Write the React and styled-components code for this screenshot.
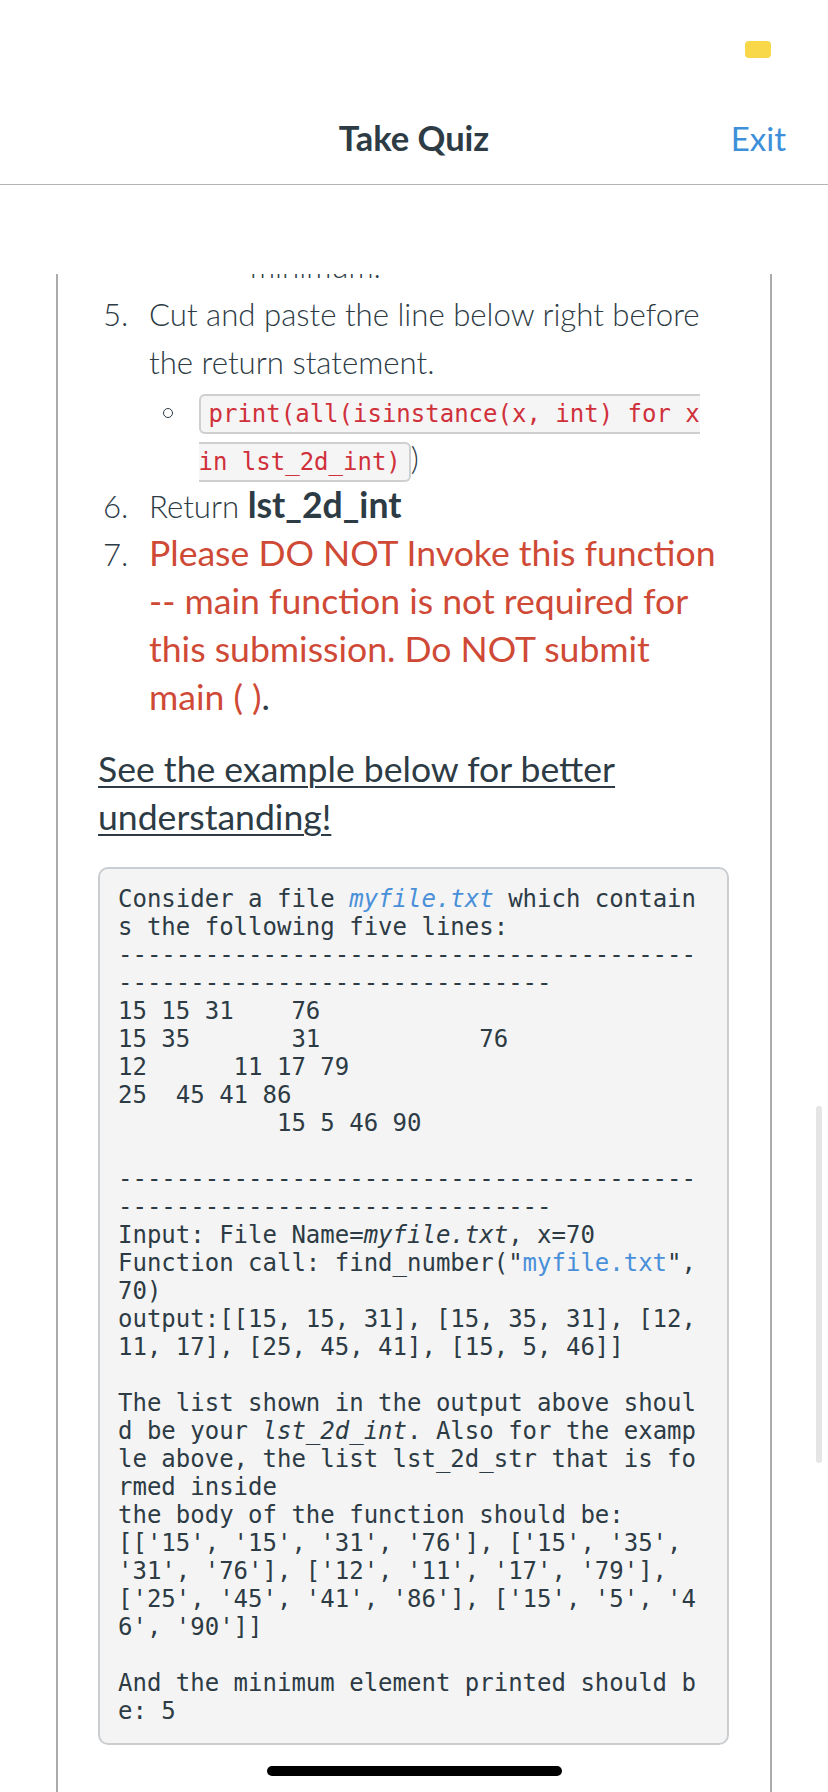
import React from "react";
import styled, { createGlobalStyle } from "styled-components";

const Global = createGlobalStyle`
  html, body { margin: 0; padding: 0; background: #fff; }
  * { box-sizing: border-box; }
`;

const Screen = styled.div`
  position: relative;
  width: 828px;
  height: 1792px;
  overflow: hidden;
  background: #ffffff;
  font-family: Lato, "Open Sans", sans-serif;
  color: #2d3b45;
`;

const StatusBar = styled.div`
  height: 96px;
  display: flex;
  justify-content: flex-end;
  align-items: flex-start;
  padding: 41px 57px 0 0;
`;

const Battery = styled.div`
  width: 26px;
  height: 17px;
  border-radius: 4px;
  background: #f8d748;
`;

const NavBar = styled.header`
  height: 89px;
  display: grid;
  grid-template-columns: 1fr auto 1fr;
  align-items: baseline;
  padding-top: 21px;
  border-bottom: 1px solid #b5b5b5;
  line-height: normal;
`;

const Title = styled.h1`
  grid-column: 2;
  margin: 0;
  font-size: 34.5px;
  font-weight: 700;
  color: #2d3b45;
`;

const ExitLink = styled.span`
  justify-self: end;
  padding-right: 42px;
  font-size: 33px;
  color: #3d8fda;
  font-weight: 400;
`;

const Card = styled.main`
  margin: 89px 56px 0;
  height: 1518px;
  overflow: hidden;
  border-left: 2px solid #ababab;
  border-right: 2px solid #ababab;
  padding: 0 41px 0 40px;
  font-size: 31.2px;
  line-height: 48px;
  font-weight: 300;
`;

const ClippedLine = styled.div`
  margin-top: -32px;
  padding-left: 152px;
`;

const List = styled.ol`
  list-style: none;
  margin: 0;
  padding: 0;
`;

const Item = styled.li`
  display: grid;
  grid-template-columns: 51px 1fr;
`;

const Num = styled.span`
  padding-left: 5px;
`;

const SubList = styled.ul`
  list-style: none;
  margin: 0;
  padding: 0;
`;

const SubItem = styled.li`
  display: grid;
  grid-template-columns: 49.5px 1fr;
`;

const Bullet = styled.span`
  display: block;
  width: 10px;
  height: 10px;
  margin: 22px 0 0 14px;
  border: 1.6px solid #2d3b45;
  border-radius: 50%;
`;

const Code = styled.code`
  font-family: "DejaVu Sans Mono", monospace;
  font-size: 24px;
  line-height: 28px;
  color: #d0303a;
  background: #f5f5f5;
  border: 2px solid #cdcfd1;
  border-radius: 6px;
  padding: 4px 8px;
`;

const Strong = styled.strong`
  font-size: 35.6px;
  line-height: 1;
  font-weight: 700;
`;

const Warn = styled.span`
  font-size: 35.6px;
  line-height: 1;
  color: #cf4a36;
  font-weight: 400;
`;

const ExampleLink = styled.p`
  margin: 24px 0 0;
`;

const LinkText = styled.span`
  font-size: 35.6px;
  line-height: 1;
  font-weight: 400;
  text-decoration: underline;
  text-decoration-thickness: 2px;
  text-underline-offset: 4px;
`;

const Pre = styled.pre`
  margin: 25px 0 0;
  padding: 16px 18px 18px;
  background: #f4f4f4;
  border: 2px solid #cbced1;
  border-radius: 10px;
  font-family: "DejaVu Sans Mono", monospace;
  font-size: 24px;
  line-height: 28px;
  color: #2d3b45;
  white-space: pre;
  overflow: hidden;
`;

const FileName = styled.span`
  color: ${(p) => (p.$blue ? "#4a90d9" : "inherit")};
  font-style: ${(p) => (p.$italic ? "italic" : "normal")};
`;

const Em = styled.em`
  font-style: italic;
`;

const Scrollbar = styled.div`
  position: absolute;
  left: 816px;
  top: 1106px;
  width: 6px;
  height: 357px;
  border-radius: 3px;
  background: #e5e5e5;
`;

const HomeIndicator = styled.div`
  position: absolute;
  left: 50%;
  bottom: 16px;
  width: 295px;
  height: 10px;
  margin-left: -147px;
  border-radius: 5px;
  background: #000;
`;

export default function App() {
  return (
    <>
      <Global />
      <Screen>
        <StatusBar>
          <Battery />
        </StatusBar>
        <NavBar>
          <Title>Take Quiz</Title>
          <ExitLink>Exit</ExitLink>
        </NavBar>
        <Card>
          <ClippedLine>minimum.</ClippedLine>
          <List>
            <Item>
              <Num>5.</Num>
              <div>
                Cut and paste the line below right before the return statement.
                <SubList>
                  <SubItem>
                    <Bullet />
                    <div>
                      <Code>print(all(isinstance(x, int) for x in lst_2d_int)</Code>)
                    </div>
                  </SubItem>
                </SubList>
              </div>
            </Item>
            <Item>
              <Num>6.</Num>
              <div>
                Return <Strong>lst_2d_int</Strong>
              </div>
            </Item>
            <Item>
              <Num>7.</Num>
              <div>
                <Warn>
                  Please DO NOT Invoke this function -- main function is not required for this
                  submission. Do NOT submit main ( )
                </Warn>
                <Strong as="span" style={{ fontWeight: 400 }}>.</Strong>
              </div>
            </Item>
          </List>
          <ExampleLink>
            <LinkText>See the example below for better understanding!</LinkText>
          </ExampleLink>
          <Pre>
            {"Consider a file "}
            <FileName $blue $italic>myfile.txt</FileName>
            {" which contain\ns the following five lines:\n"}
            {"----------------------------------------\n"}
            {"------------------------------\n"}
            {"15 15 31    76\n"}
            {"15 35       31           76\n"}
            {"12      11 17 79\n"}
            {"25  45 41 86\n"}
            {"           15 5 46 90\n"}
            {"\n"}
            {"----------------------------------------\n"}
            {"------------------------------\n"}
            {"Input: File Name="}
            <FileName $italic>myfile.txt</FileName>
            {", x=70\n"}
            {'Function call: find_number("'}
            <FileName $blue>myfile.txt</FileName>
            {'",\n70)\n'}
            {"output:[[15, 15, 31], [15, 35, 31], [12,\n"}
            {"11, 17], [25, 45, 41], [15, 5, 46]]\n"}
            {"\n"}
            {"The list shown in the output above shoul\n"}
            {"d be your "}
            <Em>lst_2d_int</Em>
            {". Also for the examp\n"}
            {"le above, the list lst_2d_str that is fo\n"}
            {"rmed inside\n"}
            {"the body of the function should be:\n"}
            {"[['15', '15', '31', '76'], ['15', '35',\n"}
            {"'31', '76'], ['12', '11', '17', '79'],\n"}
            {"['25', '45', '41', '86'], ['15', '5', '4\n"}
            {"6', '90']]\n"}
            {"\n"}
            {"And the minimum element printed should b\n"}
            {"e: 5"}
          </Pre>
        </Card>
        <Scrollbar />
        <HomeIndicator />
      </Screen>
    </>
  );
}
